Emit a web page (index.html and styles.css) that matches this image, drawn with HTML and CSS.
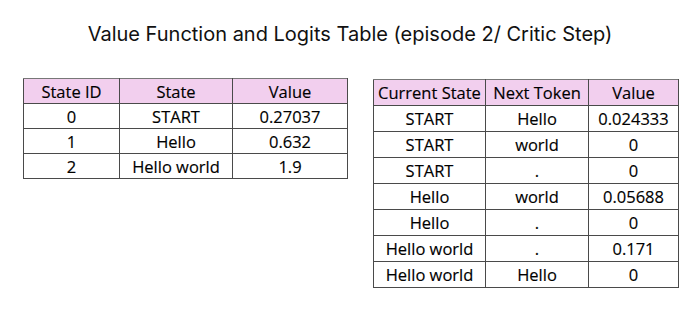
FILE: index.html
```html
<!DOCTYPE html>
<html lang="en">
<head>
    <meta charset="UTF-8">
    <meta name="viewport" content="width=device-width, initial-scale=1.0">
    <title>Value Function and Logits Table</title>
    <link rel="stylesheet" href="styles.css">
</head>
<body>
    <h1 class="title">Value Function and Logits Table (episode 2/ Critic Step)</h1>

    <div class="tables">
        <!-- Value function -->
        <table class="grid value-table">
            <thead>
                <tr><th>State ID</th><th>State</th><th>Value</th></tr>
            </thead>
            <tbody>
                <tr><td>0</td><td>START</td><td>0.27037</td></tr>
                <tr><td>1</td><td>Hello</td><td>0.632</td></tr>
                <tr><td>2</td><td>Hello world</td><td>1.9</td></tr>
            </tbody>
        </table>

        <!-- Logits -->
        <table class="grid logits-table">
            <thead>
                <tr><th>Current State</th><th>Next Token</th><th>Value</th></tr>
            </thead>
            <tbody>
                <tr><td>START</td><td>Hello</td><td>0.024333</td></tr>
                <tr><td>START</td><td>world</td><td>0</td></tr>
                <tr><td>START</td><td>.</td><td>0</td></tr>
                <tr><td>Hello</td><td>world</td><td>0.05688</td></tr>
                <tr><td>Hello</td><td>.</td><td>0</td></tr>
                <tr><td>Hello world</td><td>.</td><td>0.171</td></tr>
                <tr><td>Hello world</td><td>Hello</td><td>0</td></tr>
            </tbody>
        </table>
    </div>
</body>
</html>
```

FILE: styles.css
```css
* {
    margin: 0;
    padding: 0;
    box-sizing: border-box;
}

body {
    background: #fff;
    color: #111;
}

.title {
    font-family: 'Inter', sans-serif;
    font-weight: 400;
    font-size: 20px;
    line-height: 24px;
    text-align: center;
    color: #111;
    padding-top: 22px;
}

.tables {
    display: flex;
    align-items: flex-start;
    gap: 25px;
    padding-left: 23px;
    margin-top: 32px;
}

/* Shared table look */
.grid {
    border-collapse: collapse;
    font-family: 'Open Sans', sans-serif;
    font-size: 16.5px;
    color: #000;
    table-layout: fixed;
}

.grid th,
.grid td {
    border: 1px solid #4a4a4a;
    text-align: center;
    font-weight: 400;
    padding: 0;
    white-space: nowrap;
    -webkit-text-stroke: 0.15px #000;
}

.grid th {
    background: #f2cfee;
}

.grid thead tr th {
    border-top-color: #777;
}

.value-table {
    width: 324px;
}

.value-table th,
.value-table td {
    height: 25px;
}

.value-table th:nth-child(1) { width: 96px; }
.value-table th:nth-child(2) { width: 113px; }
.value-table th:nth-child(3) { width: 115px; }

.logits-table {
    width: 305px;
    margin-top: 1px;
}

.logits-table th,
.logits-table td {
    height: 26px;
}

.logits-table th:nth-child(1) { width: 112px; }
.logits-table th:nth-child(2) { width: 103px; }
.logits-table th:nth-child(3) { width: 90px; }
```
